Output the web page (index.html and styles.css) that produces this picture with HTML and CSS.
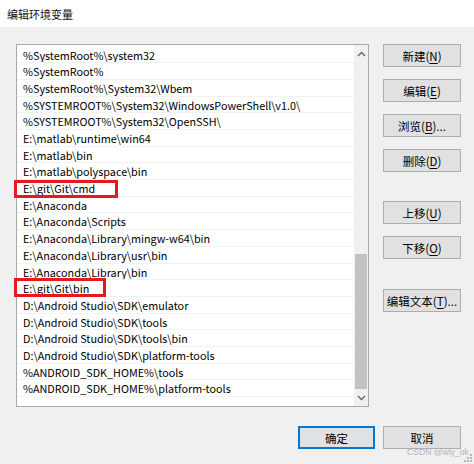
FILE: index.html
```html
<!DOCTYPE html>
<html>
<head>
<meta charset="utf-8">
<link rel="stylesheet" href="styles.css">
</head>
<body>
<div class="window">
  <div class="titlebar">编辑环境变量</div>
  <div class="content">
    <div class="main">
      <div class="listbox">
        <div class="rows">
          <div class="row">%SystemRoot%\system32</div>
          <div class="row">%SystemRoot%</div>
          <div class="row">%SystemRoot%\System32\Wbem</div>
          <div class="row">%SYSTEMROOT%\System32\WindowsPowerShell\v1.0\</div>
          <div class="row">%SYSTEMROOT%\System32\OpenSSH\</div>
          <div class="row">E:\matlab\runtime\win64</div>
          <div class="row">E:\matlab\bin</div>
          <div class="row">E:\matlab\polyspace\bin</div>
          <div class="row">E:\git\Git\cmd</div>
          <div class="row">E:\Anaconda</div>
          <div class="row">E:\Anaconda\Scripts</div>
          <div class="row">E:\Anaconda\Library\mingw-w64\bin</div>
          <div class="row">E:\Anaconda\Library\usr\bin</div>
          <div class="row">E:\Anaconda\Library\bin</div>
          <div class="row">E:\git\Git\bin</div>
          <div class="row">D:\Android Studio\SDK\emulator</div>
          <div class="row">D:\Android Studio\SDK\tools</div>
          <div class="row">D:\Android Studio\SDK\tools\bin</div>
          <div class="row">D:\Android Studio\SDK\platform-tools</div>
          <div class="row">%ANDROID_SDK_HOME%\tools</div>
          <div class="row">%ANDROID_SDK_HOME%\platform-tools</div>
        </div>
        <div class="scrollbar">
          <div class="arrow">
            <svg width="9" height="6" viewBox="0 0 9 6"><path d="M1 5 L4.5 1.5 L8 5" fill="none" stroke="#606060" stroke-width="1.3"/></svg>
          </div>
          <div class="track"><div class="thumb"></div></div>
          <div class="arrow">
            <svg width="9" height="6" viewBox="0 0 9 6"><path d="M1 1 L4.5 4.5 L8 1" fill="none" stroke="#606060" stroke-width="1.3"/></svg>
          </div>
        </div>
      </div>
      <div class="side">
        <button class="btn">新建(<u>N</u>)</button>
        <button class="btn">编辑(<u>E</u>)</button>
        <button class="btn">浏览(<u>B</u>)...</button>
        <button class="btn">删除(<u>D</u>)</button>
        <button class="btn gap-lg">上移(<u>U</u>)</button>
        <button class="btn">下移(<u>O</u>)</button>
        <button class="btn gap-lg2">编辑文本(<u>T</u>)...</button>
      </div>
    </div>
    <div class="footer">
      <button class="btn btn-default">确定</button>
      <button class="btn">取消</button>
    </div>
  </div>
  <div class="mark mark-1"></div>
  <div class="mark mark-2"></div>
  <div class="watermark">CSDN @wly_ok</div>
  <div class="grip">
    <svg width="8" height="8" viewBox="0 0 8 8" fill="#b8b8b8"><rect x="6" y="0" width="2" height="2"/><rect x="3" y="3" width="2" height="2"/><rect x="6" y="3" width="2" height="2"/><rect x="0" y="6" width="2" height="2"/><rect x="3" y="6" width="2" height="2"/><rect x="6" y="6" width="2" height="2"/></svg>
  </div>
</div>
</body>
</html>
```

FILE: styles.css
```css
* { box-sizing: border-box; }
html, body { margin: 0; padding: 0; }
body {
  width: 474px;
  height: 464px;
  overflow: hidden;
  font-family: "Noto Sans CJK SC", sans-serif;
  font-size: 12px;
  color: #000;
  background: #f0f0f0;
}
.window {
  position: relative;
  width: 474px;
  height: 464px;
  display: flex;
  flex-direction: column;
}
.titlebar {
  height: 27px;
  background: #fff;
  padding-left: 7px;
  line-height: 29px;
  font-size: 11px;
  font-family: "Noto Sans CJK SC", sans-serif;
  color: #111;
}
.content {
  flex: 1;
  padding: 17px 13px 0 16px;
  display: flex;
  flex-direction: column;
}
.main {
  display: flex;
  gap: 14px;
}
.listbox {
  width: 353px;
  height: 363px;
  background: #fff;
  border: 1px solid #a9a9a9;
  display: flex;
}
.rows {
  flex: 1;
  padding-top: 1.6px;
}
.row {
  height: 16.7px;
  line-height: 16px;
  padding-left: 6px;
  border-bottom: 1px solid #f2f2f2;
  white-space: nowrap;
  overflow: hidden;
  font-family: "Noto Sans CJK SC", sans-serif;
  font-size: 10.8px;
  color: #000;
}
.scrollbar {
  width: 14px;
  background: #f0f0f0;
  display: flex;
  flex-direction: column;
}
.arrow {
  height: 17px;
  display: flex;
  align-items: center;
  justify-content: center;
}
.track {
  flex: 1;
  display: flex;
  flex-direction: column;
}
.thumb {
  margin-top: 192px;
  flex: 1;
  margin-left: 1px;
  margin-right: 1px;
  background: #c2c2c2;
}
.side {
  width: 78px;
  display: flex;
  flex-direction: column;
  gap: 12px;
}
.btn {
  width: 78px;
  height: 23px;
  padding: 0;
  background: #e1e1e1;
  border: 1px solid #adadad;
  font-family: "Noto Sans CJK SC", sans-serif;
  font-size: 11.5px;
  color: #000;
  line-height: 20px;
}
.btn u { text-decoration-thickness: 1px; text-underline-offset: 2px; }
.gap-lg { margin-top: 17px; }
.gap-lg2 { margin-top: 18px; }
.footer {
  margin-top: 19px;
  display: flex;
  justify-content: flex-end;
  gap: 8px;
}
.btn-default {
  width: 77px;
  border: 1px solid #0078d7;
  box-shadow: inset 0 0 0 1px #0078d7;
}
.mark {
  position: absolute;
  border: 3px solid #e5191f;
}
.mark-1 { left: 14px; top: 180px; width: 104px; height: 18px; }
.mark-2 { left: 14px; top: 278px; width: 92px; height: 19px; }
.watermark {
  position: absolute;
  left: 407px;
  top: 447px;
  white-space: nowrap;
  font-family: "Liberation Sans", sans-serif;
  font-size: 8.6px;
  color: #b4b4b4;
}
.grip {
  position: absolute;
  right: 2px;
  bottom: 2px;
  line-height: 0;
}
```
